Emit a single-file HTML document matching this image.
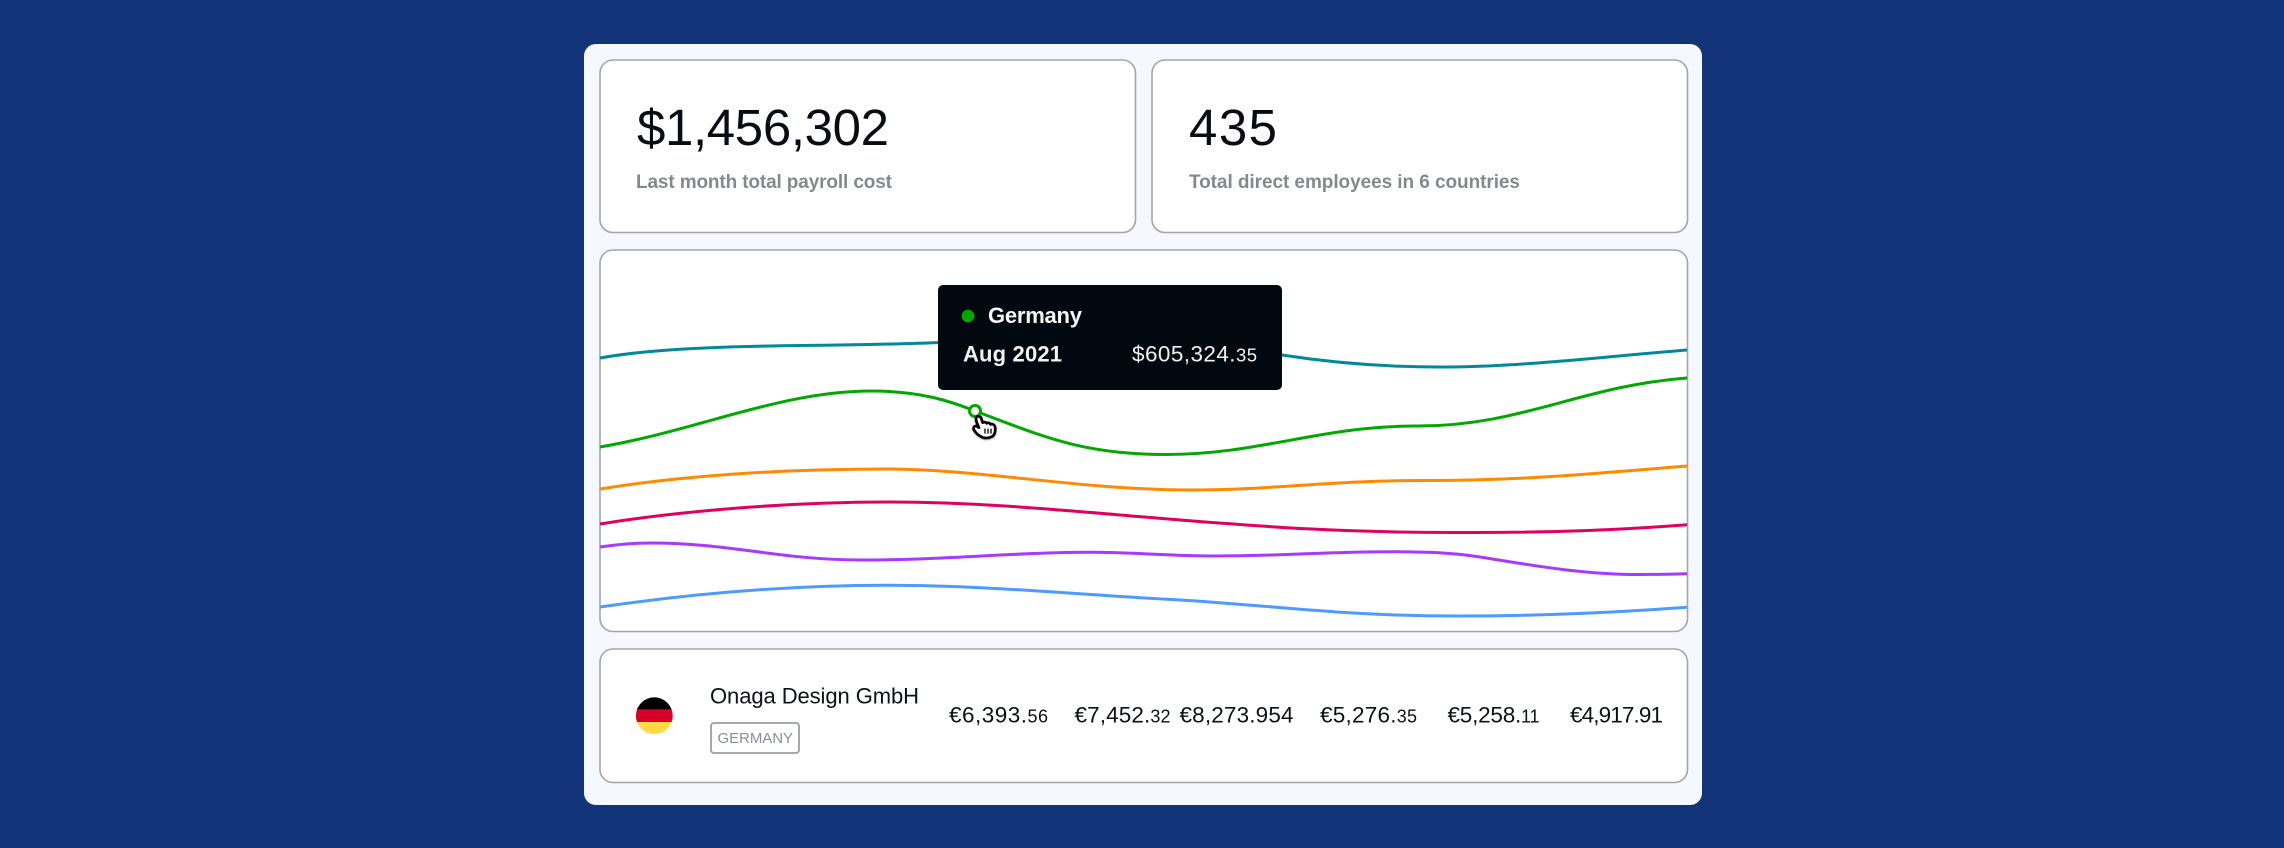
<!DOCTYPE html>
<html lang="en"><head><meta charset="utf-8"><title>Payroll</title>
<style>
html,body{margin:0;padding:0;background:#14347a;width:2284px;height:848px;overflow:hidden}
svg{display:block}
text{font-family:"Liberation Sans",sans-serif}
.b{font-weight:700}
.amt{font-size:22.5px;fill:#0b1116}
.amt tspan{font-size:18px}
.c{fill:none;stroke-width:3}
</style></head><body>
<svg width="2284" height="848" viewBox="0 0 2284 848" xmlns="http://www.w3.org/2000/svg">
<rect width="2284" height="848" fill="#14347a"/>
<rect x="584" y="44" width="1118" height="761" rx="12" fill="#f5f9ff"/>
<g fill="#fff" stroke="#a3a5a9" stroke-width="1.600">
<rect x="600" y="60" width="535.500" height="172.500" rx="13"/>
<rect x="1152" y="60" width="535.500" height="172.500" rx="13"/>
<rect x="600" y="250" width="1087.500" height="381.500" rx="13"/>
<rect x="600" y="649" width="1087.500" height="133.500" rx="13"/>
</g>
<text x="637" y="145" font-size="51" fill="#070d13" textLength="252">$1,456,302</text>
<text x="636" y="188" class="b" font-size="19" fill="#85898e" textLength="256">Last month total payroll cost</text>
<text x="1189" y="145" font-size="51" fill="#070d13" textLength="88">435</text>
<text x="1189" y="188" class="b" font-size="19" fill="#85898e" textLength="331">Total direct employees in 6 countries</text>

<path class="c" stroke="#00899b" d="M600 358C650 349 720 346.500 800 345.500C860 345 900 344 940 342.500C1060 340 1230 348 1282 355C1340 364 1390 367 1439 367C1520 367 1600 357 1687 350"/>
<path class="c" stroke="#00a800" d="M600 447C700 430 780 391 872 391C920 391 950 401 975 411C1040 435 1080 454.500 1166 454.500C1260 454.500 1320 426 1415 426C1520 427 1580 386 1687 378"/>
<path class="c" stroke="#ff8a00" d="M600 489C680 476 780 469 886 469C980 469 1080 490 1192 490C1270 490 1330 480.500 1420 480.500C1520 481 1600 473 1687 466"/>
<path class="c" stroke="#e0005f" d="M600 524C680 511 790 502 886 502C990 502 1080 512 1180 520C1270 527 1340 532.500 1457 532.500C1550 533 1620 530 1687 524.700"/>
<path class="c" stroke="#a63bff" d="M600 547C620 544 635 543 651 543C730 543 780 560 861 560C950 560 1010 552.300 1090 552.300C1140 552.500 1170 556 1214 556C1290 556 1320 551.700 1392 551.700C1430 551.700 1455 553 1480 557C1535 566 1585 574.500 1639 574.500C1660 574.500 1675 574 1687 573.700"/>
<path class="c" stroke="#4d9bff" d="M600 607C690 594 790 585.300 886 585.300C990 585.300 1080 595 1180 600C1280 606 1340 616 1457 616C1550 616 1620 612 1687 607.300"/>

<rect x="938" y="285" width="344" height="105" rx="5" fill="#01080f"/>
<circle cx="968" cy="316" r="6.300" fill="#00a800"/>
<text x="988" y="323" class="b" font-size="22" fill="#f6f7f8" textLength="94">Germany</text>
<text x="963" y="361.500" class="b" font-size="22" fill="#f1f2f3" textLength="99">Aug 2021</text>
<text x="1132" y="361.500" font-size="22.500" fill="#f1f2f3" textLength="125">$605,324.<tspan font-size="18.500">35</tspan></text>

<circle cx="975" cy="411" r="5.500" fill="#fff" stroke="#00a800" stroke-width="3"/>
<g transform="translate(950 390) scale(.3333)" style="filter:drop-shadow(0 2px 2px rgba(0,0,0,.5))">
<path d="M78 84C82 76 92 78 94 86L98 98C104 95 108 97 110 100C116 97 120 99 121 103C127 101 133 104 135 110C137 122 136 130 129 138C118 144 106 145 98 142C88 138 78 130 72 120C68 113 74 106 80 109L87 113L79 94Z" fill="#fff" stroke="#000" stroke-width="8" stroke-linejoin="round"/>
<path d="M105 116V131M114 116V131M123 116V131" stroke="#000" stroke-width="4" fill="none"/>
</g>

<clipPath id="f"><circle cx="654.300" cy="715.700" r="18.400"/></clipPath>
<g clip-path="url(#f)">
<rect x="635" y="697" width="39" height="13" fill="#000"/>
<rect x="635" y="709.300" width="39" height="12.700" fill="#d80027"/>
<rect x="635" y="722" width="39" height="13" fill="#ffda44"/>
</g>
<text x="710" y="703.500" font-size="22" fill="#0b1116" textLength="209">Onaga Design GmbH</text>
<rect x="711" y="723" width="88" height="30" rx="3" fill="#fff" stroke="#9a9ea3" stroke-width="1.800"/>
<text x="717.500" y="743" font-size="15" fill="#8a8f94" textLength="75.500">GERMANY</text>
<text class="amt" x="949" y="722.500" textLength="99">€6,393.<tspan>56</tspan></text>
<text class="amt" x="1074.500" y="722.500" textLength="96">€7,452.<tspan>32</tspan></text>
<text class="amt" x="1179.500" y="722.500" textLength="114">€8,273.954</text>
<text class="amt" x="1320" y="722.500" textLength="97">€5,276.<tspan>35</tspan></text>
<text class="amt" x="1447.500" y="722.500" textLength="92">€5,258.<tspan>11</tspan></text>
<text class="amt" x="1570" y="722.500" textLength="93">€4,917.91</text>
</svg>
</body></html>
